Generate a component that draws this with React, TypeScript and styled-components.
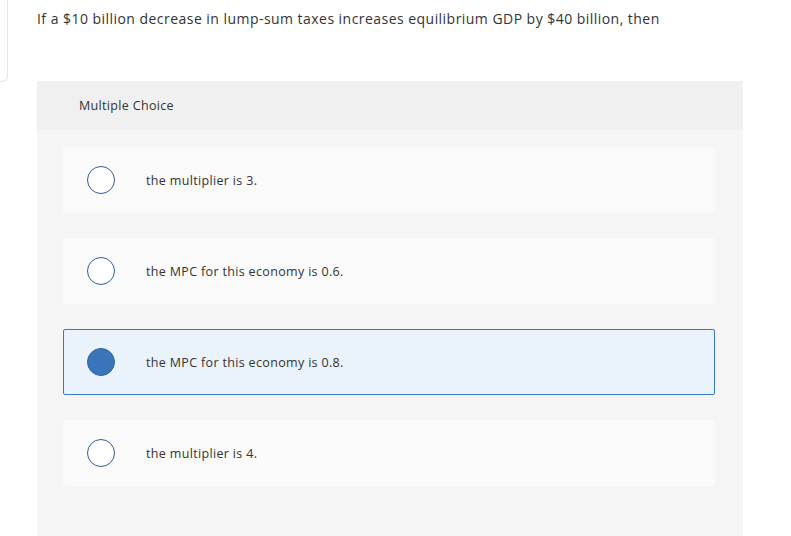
import React from "react";
import styled, { createGlobalStyle } from "styled-components";

const GlobalStyle = createGlobalStyle`
  html, body {
    margin: 0;
    padding: 0;
    background: #ffffff;
  }
  body {
    font-family: "Open Sans", Lato, Arial, sans-serif;
    color: #333333;
  }
`;

const Page = styled.div`
  display: flex;
  align-items: flex-start;
  width: 791px;
  height: 536px;
  overflow: hidden;
`;

const SideCard = styled.div`
  flex: 0 0 8px;
  height: 82px;
  box-sizing: border-box;
  border-right: 1px solid #e6e6e6;
  border-bottom: 1px solid #e6e6e6;
  border-bottom-right-radius: 6px;
`;

const Main = styled.div`
  margin-left: 29px;
  width: 706px;
`;

const Question = styled.p`
  margin: 0;
  padding-top: 10px;
  height: 81px;
  box-sizing: border-box;
  font-size: 14px;
  letter-spacing: 0.46px;
  line-height: 18px;
  color: #333333;
`;

const Panel = styled.div`
  background: #f5f5f5;
  min-height: 470px;
`;

const PanelHeader = styled.div`
  height: 49px;
  display: flex;
  align-items: center;
  padding-left: 42px;
  background: #f0f0f0;
  font-size: 12.5px;
  letter-spacing: 0.33px;
  color: #333333;
`;

const Options = styled.div`
  display: flex;
  flex-direction: column;
  gap: 25px;
  padding: 17px 28px 0 26px;
`;

const Option = styled.label<{ $selected?: boolean }>`
  height: 66px;
  box-sizing: border-box;
  display: flex;
  align-items: center;
  padding-left: ${(p) => (p.$selected ? "23px" : "24px")};
  background: ${(p) => (p.$selected ? "#eaf2fb" : "#fafafa")};
  border: ${(p) => (p.$selected ? "1px solid #3b78c2" : "none")};
  border-radius: 2px;
  cursor: pointer;
`;

const Radio = styled.span<{ $selected?: boolean }>`
  flex: 0 0 28px;
  height: 28px;
  box-sizing: border-box;
  border-radius: 50%;
  border: 1.5px solid ${(p) => (p.$selected ? "#2f64a3" : "#2e5e98")};
  background: ${(p) => (p.$selected ? "#3a74b9" : "#ffffff")};
`;

const OptionText = styled.span`
  margin-left: 31px;
  font-size: 12.5px;
  letter-spacing: 0.34px;
  color: #333333;
`;

const choices = [
  "the multiplier is 3.",
  "the MPC for this economy is 0.6.",
  "the MPC for this economy is 0.8.",
  "the multiplier is 4.",
];

export default function App() {
  const selected = 2;
  return (
    <>
      <GlobalStyle />
      <Page>
        <SideCard />
        <Main>
          <Question>
            If a $10 billion decrease in lump-sum taxes increases equilibrium GDP by $40 billion, then
          </Question>
          <Panel>
            <PanelHeader>Multiple Choice</PanelHeader>
            <Options>
              {choices.map((c, i) => (
                <Option key={c} $selected={i === selected}>
                  <Radio $selected={i === selected} />
                  <OptionText>{c}</OptionText>
                </Option>
              ))}
            </Options>
          </Panel>
        </Main>
      </Page>
    </>
  );
}
